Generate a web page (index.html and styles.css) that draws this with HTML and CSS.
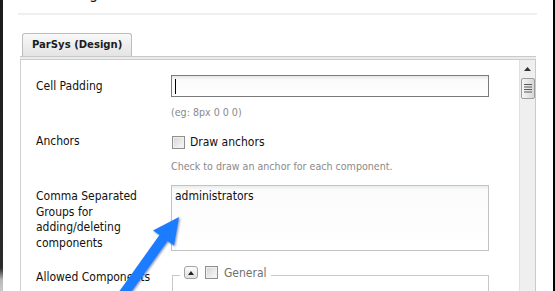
FILE: index.html
```html
<!DOCTYPE html>
<html>
<head>
<meta charset="utf-8">
<title>ParSys (Design)</title>
<link rel="stylesheet" href="styles.css">
</head>
<body>
<div class="screen">
  <div class="edge-left"></div>
  <div class="dialog">
    <div class="title"><span class="title-text">g</span></div>
    <div class="rule"></div>
    <div class="tabpanel">
      <div class="tabstrip"><div class="tab">ParSys (Design)</div></div>
      <div class="strip-spacer"></div>
      <div class="panel-body">
        <div class="form">
          <div class="row row-padding">
            <div class="label label-tall">Cell Padding</div>
            <div class="field">
              <div class="input focused"><span class="caret"></span></div>
              <div class="hint">(eg: 8px 0 0 0)</div>
            </div>
          </div>
          <div class="row row-anchors">
            <div class="label">Anchors</div>
            <div class="field">
              <div class="check-line"><span class="cb"></span><span class="check-text">Draw anchors</span></div>
              <div class="hint">Check to draw an anchor for each component.</div>
            </div>
          </div>
          <div class="row row-groups">
            <div class="label label-multi">Comma Separated Groups for adding/deleting components</div>
            <div class="field">
              <div class="textarea">administrators</div>
            </div>
          </div>
          <div class="row row-allowed">
            <div class="label label-allowed">Allowed Components</div>
            <div class="field">
              <fieldset class="group">
                <legend class="group-legend">
                  <span class="toggle"><svg width="6" height="4" viewBox="0 0 6 4"><path d="M0 4 L3 0 L6 4 Z" fill="#222"/></svg></span>
                  <span class="cb"></span>
                  <span class="group-name">General</span>
                </legend>
              </fieldset>
            </div>
          </div>
        </div>
        <div class="scrollbar">
          <svg class="scroll-up" width="7" height="4" viewBox="0 0 7 4"><path d="M0 4 L3.5 0 L7 4 Z" fill="#333"/></svg>
          <div class="thumb">
            <svg width="8" height="9" viewBox="0 0 8 9"><path d="M0 0.5H8M0 3H8M0 5.5H8M0 8H8" stroke="#5a5a5a" stroke-width="1"/></svg>
          </div>
        </div>
      </div>
    </div>
  </div>
  <div class="edge-right"></div>
  <svg class="arrow" width="555" height="291" viewBox="0 0 555 291">
    <defs>
      <filter id="sh" x="-20%" y="-20%" width="140%" height="140%">
        <feDropShadow dx="1" dy="1" stdDeviation="1.2" flood-color="#0a2a66" flood-opacity="0.55"/>
      </filter>
    </defs>
    <polygon filter="url(#sh)" fill="#1f7bff" points="179,217 153,230.5 159.5,235 113.8,299 121.8,305 167.5,241 174,245.5"/>
  </svg>
</div>
</body>
</html>
```

FILE: styles.css
```css
html, body {
  margin: 0;
  padding: 0;
}
body {
  width: 555px;
  height: 291px;
  overflow: hidden;
  background: #fff;
  font-family: "DejaVu Sans Condensed", "Liberation Sans", Arial, sans-serif;
  color: #111;
}
.screen {
  position: relative;
  display: flex;
  height: 291px;
}
.edge-left {
  flex: none;
  width: 3px;
  background: linear-gradient(#1b1b1b 0, #2a2a2a 268px, #b9b9b9 280px, #c9c9c9 100%);
}
.edge-right {
  flex: none;
  width: 2px;
  background: #000;
}
.dialog {
  flex: 1;
  min-width: 0;
}
.title {
  height: 13px;
  overflow: hidden;
  padding-left: 86px;
}
.title-text {
  display: block;
  font-size: 16px;
  line-height: 16px;
  margin-top: -14px;
  color: #222;
}
.rule {
  height: 2px;
  background: #efefef;
  margin: 0 16px 0 15px;
}
.tabpanel {
  margin: 18px 0 0 17px;
  width: 516px;
}
.tabstrip {
  display: flex;
  height: 23px;
}
.tab {
  margin-left: 2px;
  height: 22px;
  line-height: 22px;
  padding: 0 9px;
  border: 1px solid #bdbdbd;
  border-bottom: none;
  border-radius: 3px 3px 0 0;
  background: linear-gradient(#f8f8f8, #e4e4e4);
  font-size: 11.2px;
  font-weight: bold;
  color: #1b1d24;
}
.strip-spacer {
  height: 2px;
  border-top: 1px solid #c9c9c9;
  border-bottom: 1px solid #cdcdcd;
  background: #ebebeb;
}
.panel-body {
  display: flex;
  height: 240px;
  border-left: 1px solid #d0d0d0;
  border-right: 1px solid #cacaca;
}
.form {
  flex: 1;
  min-width: 0;
  padding: 15px 0 0 15px;
}
.row {
  display: grid;
  grid-template-columns: 135px 318px;
}
.label {
  font-size: 12px;
  line-height: 16px;
  color: #111;
}
.label-tall {
  line-height: 22px;
}
.label-multi {
  line-height: 15.7px;
  padding-top: 4px;
  padding-right: 20px;
}
.label-allowed {
  padding-top: 3px;
}
.row-anchors {
  margin-top: 14px;
}
.row-groups {
  margin-top: 12px;
}
.row-allowed {
  margin-top: 14px;
}
.input {
  box-sizing: border-box;
  height: 22px;
  padding: 3px;
  border: 1px solid #c2c2c2;
  background: linear-gradient(#e6e6e6 0, #fbfbfb 4px, #fff 100%);
}
.input.focused {
  border-color: #7b7b7b;
}
.caret {
  display: block;
  width: 1px;
  height: 15px;
  background: #000;
}
.hint {
  margin-top: 8px;
  font-size: 10.6px;
  line-height: 14px;
  color: #8a8a8a;
}
.check-line {
  display: flex;
  align-items: center;
  height: 18px;
  gap: 5px;
  padding-left: 1px;
}
.check-text {
  font-size: 12px;
}
.cb {
  flex: none;
  box-sizing: border-box;
  width: 13px;
  height: 13px;
  border: 1px solid #8e8f8f;
  background: linear-gradient(135deg, #d3d3d3 0%, #e9e9e9 55%, #fbfbfb 100%);
  box-shadow: inset 0 0 0 1px #f0f0f0;
}
.textarea {
  box-sizing: border-box;
  height: 66px;
  padding: 3px;
  border: 1px solid #c2c2c2;
  background: linear-gradient(#e8eded 0, #fbfbfb 4px, #fff 100%);
  font-size: 12px;
  line-height: 15px;
  color: #111;
}
.group {
  margin: 0 0 0 1px;
  padding: 0 0 0 7px;
  border: 1px solid #c8c8c8;
  height: 60px;
  min-width: 0;
}
.group-legend {
  display: flex;
  align-items: center;
  height: 14px;
  padding: 0 4px 5px 4px;
  box-sizing: content-box;
}
.toggle {
  flex: none;
  box-sizing: border-box;
  width: 14px;
  height: 13px;
  border: 1px solid #a3a3a3;
  border-radius: 3px;
  background: linear-gradient(#fcfcfc, #e0e0e0);
  display: flex;
  align-items: center;
  justify-content: center;
  margin-right: 7px;
}
.group-legend .cb {
  margin-right: 6px;
}
.group-name {
  font-size: 12px;
  line-height: 14px;
  color: #707070;
}
.scrollbar {
  flex: none;
  box-sizing: border-box;
  width: 16px;
  background: #efefef;
  border-left: 1px solid #e0e0e0;
  display: flex;
  flex-direction: column;
  align-items: center;
}
.scroll-up {
  margin-top: 7px;
}
.thumb {
  box-sizing: border-box;
  margin-top: 7px;
  width: 14px;
  height: 21px;
  border: 1px solid #9c9c9c;
  border-radius: 2px;
  background: linear-gradient(90deg, #f6f6f6, #e4e4e4 60%, #d6d6d6);
  display: flex;
  align-items: center;
  justify-content: center;
}
.arrow {
  position: absolute;
  left: 0;
  top: 0;
  pointer-events: none;
}
```
